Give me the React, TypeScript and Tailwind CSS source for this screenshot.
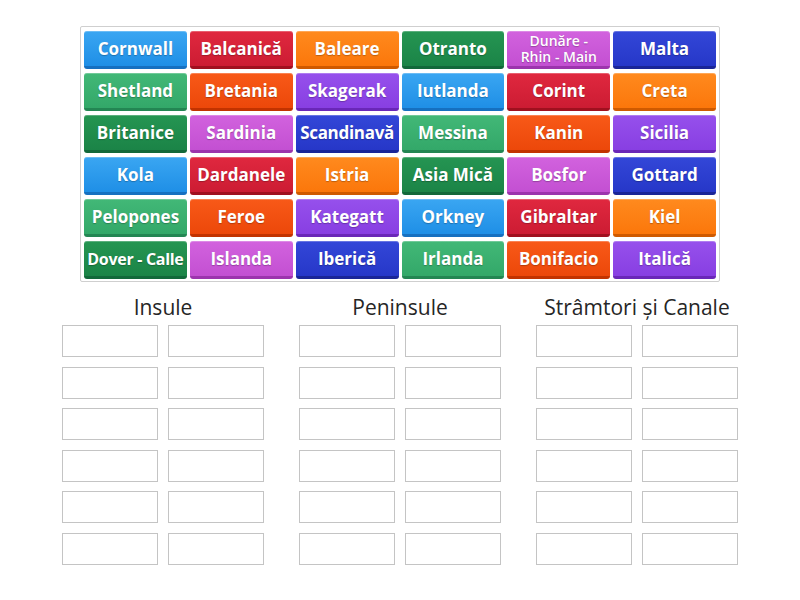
import React from "react";

const COLORS = [
  { bg: "bg-[linear-gradient(#3aa6f2,#1f8fe6)]", border: "border-b-[#1670c0]" }, // blue
  { bg: "bg-[linear-gradient(#e0283f,#cc1c33)]", border: "border-b-[#a0101f]" }, // red
  { bg: "bg-[linear-gradient(#ff8a1e,#fb770b)]", border: "border-b-[#cf5a00]" }, // orange
  { bg: "bg-[linear-gradient(#259552,#1b8447)]", border: "border-b-[#12683a]" }, // dark green
  { bg: "bg-[linear-gradient(#d262de,#c350d2)]", border: "border-b-[#9c34ad]" }, // pink
  { bg: "bg-[linear-gradient(#3347d8,#2637c8)]", border: "border-b-[#1a2597]" }, // indigo
  { bg: "bg-[linear-gradient(#42b877,#33a869)]", border: "border-b-[#238653]" }, // green
  { bg: "bg-[linear-gradient(#f85918,#ec480a)]", border: "border-b-[#c23300]" }, // orange-red
  { bg: "bg-[linear-gradient(#9650ec,#883fe2)]", border: "border-b-[#6a27b8]" }, // purple
];

type Tile = { t: string; size?: string };

const TILES: Tile[] = [
  { t: "Cornwall" },
  { t: "Balcanică" },
  { t: "Baleare" },
  { t: "Otranto" },
  { t: "Dunăre - Rhin - Main", size: "small" },
  { t: "Malta" },
  { t: "Shetland" },
  { t: "Bretania" },
  { t: "Skagerak" },
  { t: "Iutlanda" },
  { t: "Corint" },
  { t: "Creta" },
  { t: "Britanice" },
  { t: "Sardinia" },
  { t: "Scandinavă", size: "mid" },
  { t: "Messina" },
  { t: "Kanin" },
  { t: "Sicilia" },
  { t: "Kola" },
  { t: "Dardanele" },
  { t: "Istria" },
  { t: "Asia Mică" },
  { t: "Bosfor" },
  { t: "Gottard" },
  { t: "Pelopones" },
  { t: "Feroe" },
  { t: "Kategatt" },
  { t: "Orkney" },
  { t: "Gibraltar" },
  { t: "Kiel" },
  { t: "Dover - Calle", size: "mid2" },
  { t: "Islanda" },
  { t: "Iberică" },
  { t: "Irlanda" },
  { t: "Bonifacio" },
  { t: "Italică" },
];

const GROUPS = ["Insule", "Peninsule", "Strâmtori și Canale"];

export default function App() {
  return (
    <div
      className="w-[800px] h-[600px] bg-white overflow-hidden"
      style={{ fontFamily: '"Open Sans", "Noto Sans", sans-serif' }}
    >
      <div className="mx-auto mt-[26px] w-[640px] border border-[#cfcfcf] rounded-[2px] px-[3px] pt-[4px] pb-[2px]">
        <div className="grid grid-cols-6 gap-x-[3px] gap-y-[4px]">
          {TILES.map((tile, i) => {
            const c = COLORS[i % 9];
            let textCls = "text-[17px] leading-[20px]";
            if (tile.size === "small") textCls = "text-[14px] leading-[16px] font-semibold";
            if (tile.size === "mid") textCls = "text-[17px] leading-[20px] tracking-[-0.3px]";
            if (tile.size === "mid2") textCls = "text-[16px] leading-[20px] tracking-[-0.3px]";
            return (
              <div
                key={i}
                className={`h-[38px] rounded-[3px] border-b-[3px] ${c.bg} ${c.border} flex items-center justify-center text-center text-white font-bold shadow-[inset_0_1px_0_rgba(255,255,255,0.25)] [text-shadow:0_1px_1px_rgba(0,0,0,0.25)] ${textCls}`}
              >
                {tile.size === "small" ? (
                  <span>
                    Dunăre -<br />
                    Rhin - Main
                  </span>
                ) : (
                  <span className="whitespace-nowrap pt-[1px]">{tile.t}</span>
                )}
              </div>
            );
          })}
        </div>
      </div>

      <div className="mx-auto mt-[11px] w-[676px] flex gap-[35px]">
        {GROUPS.map((g) => (
          <div key={g} className="w-[202px] flex flex-col">
            <div className="h-[28px] leading-[28px] text-center text-[21px] text-[#262626] whitespace-nowrap">
              {g}
            </div>
            <div className="mt-[4px] grid grid-cols-2 gap-x-[10px] gap-y-[9.6px]">
              {Array.from({ length: 12 }).map((_, i) => (
                <div key={i} className="h-[32px] border border-[#c4c4c4] bg-white" />
              ))}
            </div>
          </div>
        ))}
      </div>
    </div>
  );
}
